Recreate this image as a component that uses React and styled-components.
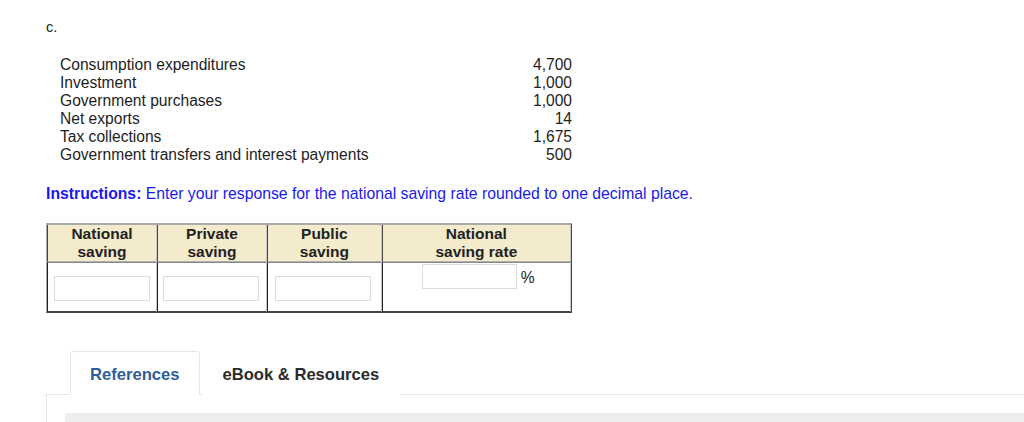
import React from "react";
import styled, { createGlobalStyle } from "styled-components";

const GlobalStyle = createGlobalStyle`
  html, body {
    margin: 0;
    padding: 0;
    background: #ffffff;
  }

  body {
    font-family: "Liberation Sans", Arial, sans-serif;
    font-size: 15.6px;
    color: #222;
  }
`;

const items = [
  ["Consumption expenditures", "4,700"],
  ["Investment", "1,000"],
  ["Government purchases", "1,000"],
  ["Net exports", "14"],
  ["Tax collections", "1,675"],
  ["Government transfers and interest payments", "500"],
];

const columns = [
  ["National", "saving", 108],
  ["Private", "saving", 108],
  ["Public", "saving", 113],
  ["National", "saving rate", 189],
];

const App = () => {
  return (
    <>
      <GlobalStyle />
      <Page>
        <PartLabel>c.</PartLabel>

        <DataList>
          {items.map(([label, value]) => (
            <React.Fragment key={label}>
              <Label>{label}</Label>
              <Value>{value}</Value>
            </React.Fragment>
          ))}
        </DataList>

        <Instructions>
          <b>Instructions:</b> Enter your response for the national saving rate
          rounded to one decimal place.
        </Instructions>

        <AnswerTable>
          <thead>
            <tr>
              {columns.map(([a, b, w], i) => (
                <HeadCell key={i} style={{ width: w }}>
                  {a}
                  <br />
                  {b}
                </HeadCell>
              ))}
            </tr>
          </thead>
          <tbody>
            <tr>
              <BodyCell>
                <Field type="text" />
              </BodyCell>
              <BodyCell $shift={-1}>
                <Field type="text" />
              </BodyCell>
              <BodyCell $shift={1}>
                <Field type="text" />
              </BodyCell>
              <RateCell>
                <RateRow>
                  <Field type="text" />
                  <Percent>%</Percent>
                </RateRow>
              </RateCell>
            </tr>
          </tbody>
        </AnswerTable>

        <Resources>
          <Tabs>
            <Tab $active>References</Tab>
            <Tab>eBook &amp; Resources</Tab>
          </Tabs>
          <Panel>
            <PanelBody />
          </Panel>
        </Resources>
      </Page>
    </>
  );
};

export default App;

const Page = styled.div`
  padding: 18px 0 0 46px;
  height: 404px;
  overflow: hidden;
`;

const PartLabel = styled.div`
  line-height: 18px;
  height: 18px;
  font-size: 14.5px;
`;

const DataList = styled.div`
  display: grid;
  grid-template-columns: 1fr auto;
  width: 512px;
  margin: 20px 0 0 14px;
  line-height: 18px;
  color: #1e1e1e;
`;

const Label = styled.div``;

const Value = styled.div`
  text-align: right;
`;

const Instructions = styled.div`
  margin-top: 21px;
  line-height: 18px;
  color: #1a1aee;
  font-size: 15.75px;

  b {
    font-weight: bold;
  }
`;

const AnswerTable = styled.table`
  margin-top: 20px;
  border-collapse: separate;
  border-spacing: 0;
  width: 526px;
  border-style: solid;
  border-width: 2px 1px 1px 1px;
  border-color: #aaa #444 #444 #aaa;
`;

const HeadCell = styled.th`
  background: #f3ebcc;
  font-size: 15.5px;
  font-weight: bold;
  color: #222;
  line-height: 18px;
  padding: 0;
  text-align: center;
  vertical-align: middle;
  border-style: solid;
  border-width: 0 1px 1px 1px;
  border-color: #444 #c8c8c8 #b0b0b0 #444;
`;

const BodyCell = styled.td`
  box-sizing: border-box;
  height: 50px;
  padding: 2px 6px 0 ${(p) => 6 + (p.$shift || 0)}px;
  vertical-align: middle;
  border-style: solid;
  border-width: 1px;
  border-color: #888 #c8c8c8 #444 #222;
`;

const RateCell = styled(BodyCell)`
  vertical-align: top;
  padding-top: 1px;
`;

const RateRow = styled.div`
  display: flex;
  align-items: flex-start;
  gap: 4px;
  padding-left: 33px;

  input {
    width: 95px;
  }
`;

const Field = styled.input`
  display: block;
  box-sizing: border-box;
  width: 96px;
  height: 25px;
  margin: 0;
  border: 1px solid #dcdcdc;
  background: #fff;
  outline: none;
`;

const Percent = styled.span`
  line-height: 18px;
  margin-top: 5px;
  color: #222;
`;

const Resources = styled.div`
  margin-top: 38px;
`;

const Tabs = styled.div`
  display: flex;
  padding-left: 24px;
  gap: 2px;
  position: relative;
  z-index: 1;
  margin-bottom: -1px;
`;

const Tab = styled.div`
  box-sizing: border-box;
  height: 44px;
  padding: 3px 20px 0 19px;
  display: flex;
  align-items: center;
  font-size: 16.6px;
  font-weight: bold;
  color: ${(p) => (p.$active ? "#2e5e99" : "#2b2b2b")};
  background: #fff;
  border: 1px solid ${(p) => (p.$active ? "#e6e6e6" : "transparent")};
  border-bottom-color: ${(p) => (p.$active ? "#fff" : "transparent")};
  border-radius: 4px 4px 0 0;
`;

const Panel = styled.div`
  border-top: 1px solid #e6e6e6;
  border-left: 1px solid #e6e6e6;
  padding: 18px 0 0 18px;
`;

const PanelBody = styled.div`
  height: 40px;
  background: #eeeeee;
  border-radius: 3px 0 0 0;
`;
